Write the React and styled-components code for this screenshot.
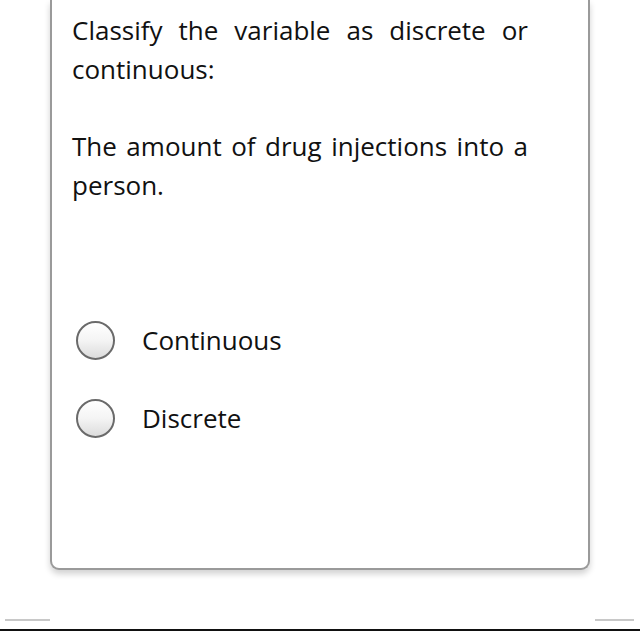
import React from 'react';
import styled, { createGlobalStyle } from 'styled-components';

const GlobalStyle = createGlobalStyle`
  html, body {
    margin: 0;
    padding: 0;
    background: #fff;
  }
  body {
    font-family: "Open Sans", "Noto Sans", sans-serif;
    color: #111;
  }
`;

const Page = styled.div`
  width: 640px;
  height: 631px;
  display: flex;
  flex-direction: column;
  overflow: hidden;
`;

const Card = styled.div`
  box-sizing: border-box;
  margin-left: 50px;
  width: 540px;
  height: 570px;
  border: 2px solid #9a9a9a;
  border-top: none;
  border-radius: 0 0 9px 9px;
  box-shadow: 0 4px 6px rgba(0, 0, 0, 0.18);
  padding: 11px 60px 0 20px;
  background: #fff;
`;

const Para = styled.p`
  margin: 0 0 38px;
  font-size: 26px;
  line-height: 39px;
  text-align: justify;
`;

const Options = styled.div`
  display: flex;
  flex-direction: column;
  gap: 39px;
  margin-top: 116px;
  padding-left: 4px;
`;

const Option = styled.label`
  display: flex;
  align-items: center;
  gap: 27px;
  font-size: 26px;
  line-height: 39px;
`;

const Radio = styled.span`
  box-sizing: border-box;
  width: 39px;
  height: 39px;
  border-radius: 50%;
  border: 2px solid #6a6a6a;
  background: linear-gradient(to bottom, #ffffff 0%, #f4f4f4 50%, #dcdcdc 100%);
  flex-shrink: 0;
`;

const Footer = styled.div`
  margin-top: auto;
  display: flex;
  justify-content: space-between;
  padding: 0 6px 8px 5px;
`;

const Rule = styled.span`
  display: block;
  width: ${(p) => p.w}px;
  height: 2px;
  background: #c8c8c8;
`;

const BlackBar = styled.div`
  height: 2px;
  background: #111;
`;

export default function App() {
  return (
    <Page>
      <GlobalStyle />
      <Card>
        <Para>Classify the variable as discrete or continuous:</Para>
        <Para>The amount of drug injections into a person.</Para>
        <Options>
          <Option>
            <Radio />
            Continuous
          </Option>
          <Option>
            <Radio />
            Discrete
          </Option>
        </Options>
      </Card>
      <Footer>
        <Rule w={45} />
        <Rule w={39} />
      </Footer>
      <BlackBar />
    </Page>
  );
}
